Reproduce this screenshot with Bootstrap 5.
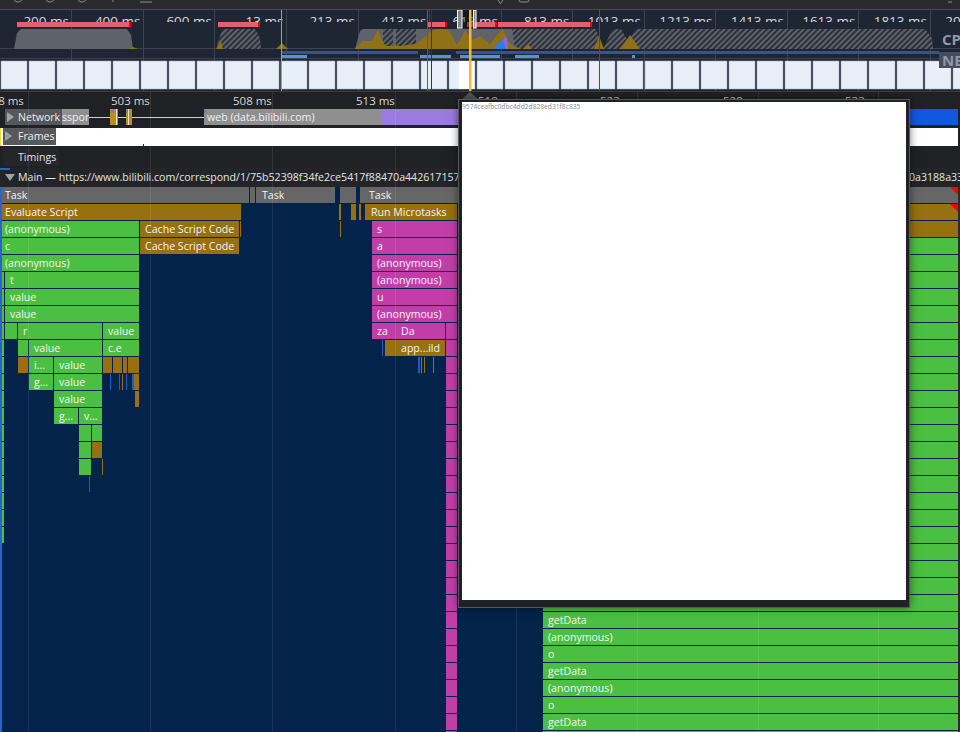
<!DOCTYPE html>
<html>
  <head>
    <title>Performance</title>
    <link href="https://cdn.jsdelivr.net/npm/bootstrap@5.3.3/dist/css/bootstrap.min.css" rel="stylesheet" />
    <script src="https://cdn.jsdelivr.net/npm/bootstrap@5.3.3/dist/js/bootstrap.bundle.min.js"></script>
    <style>
      body { background: #202124; font-family: "Open Sans", "Liberation Sans", sans-serif; font-size: 10.6px; color: #e3e3e3; }
      #app { width: 960px; height: 732px; }
      .toolbar { height: 10px; background: #292a2d; border-bottom: 1px solid #494c50; }
      .overview { height: 82px; background: #1f2633; border-bottom: 1px solid #3a3d42; }
      .over-label { top: 1px; height: 11px; width: 60px; text-align: right; font-size: 13.5px; line-height: 20px; color: #d5d8dc; }
      .ruler { height: 17px; }
      .ruler-label { top: 1px; font-size: 11.5px; line-height: 16px; color: #d6d6d6; }
      .net-track { height: 17px; margin-bottom: 2px; background: #202124; }
      .seg { top: 0; height: 16px; line-height: 16px; color: #f1f1f1; padding-left: 3px; }
      .net-line { left: 89px; top: 8px; width: 115px; height: 1px; background: #cfcfcf; }
      .net-tick { top: 0; width: 1px; height: 16px; background: #e8e2cc; }
      .net-dot { top: 1px; width: 3px; height: 3px; background: #6d86a8; }
      .chip { left: 5px; top: 0; height: 16px; line-height: 16px; width: 57px; padding-left: 13px; background: #55575b; color: #ececec; }
      .tri { width: 0; height: 0; border-style: solid; }
      .tri-right { left: 2px; top: 3px; border-width: 5px 0 5px 7px; border-color: transparent transparent transparent #a2a2a2; }
      .tri-down { left: 5px; top: 6px; border-width: 7px 5px 0 5px; border-color: #a2a2a2 transparent transparent transparent; }
      .frames-track { height: 18px; margin-right: 2px; background: #fff; border-left: 1px solid #f2d93c; }
      .frames-chip { left: 2px; width: 53px; height: 17px; background: #58595c; line-height: 17px; padding-left: 15px; color: #eee; }
      .frames-dot { left: 142px; bottom: 0; width: 1px; height: 2px; background: #222; }
      .timings-track { height: 22px; line-height: 22px; padding-left: 18px; }
      .timings-chip { left: 3px; top: 2px; width: 56px; height: 18px; background: #252628; }
      .main-head { height: 19px; line-height: 19px; padding-left: 18px; white-space: nowrap; background: #232427; color: #e4e4e4; }
      .main-tail { left: 909px; }
      .main-edge { left: 0; top: 0; width: 10px; height: 2px; background: #2a62c8; }
      .flame { background: #03234a; }
      .flame-edge { left: 0; top: 0; bottom: 0; width: 2px; background: #2a62c8; }
      .flame-right { right: 0; top: 0; bottom: 0; width: 2px; background: #2b2c2f; }
      .bar { height: 16px; line-height: 16px; color: #f4f4f4; white-space: nowrap; overflow: hidden; }
      .c-task { background: #666; }
      .c-gold { background: #97700f; }
      .c-green { background: #4bbf41; }
      .c-pink { background: #c13ea8; }
      .c-blue { background: #1a5fc4; }
      .corner { right: 0; top: 0; width: 0; height: 0; border-style: solid; border-width: 0 8px 8px 0; border-color: transparent #f00 transparent transparent; }
      .gridline { top: 92px; bottom: 0; width: 1px; background: rgba(255, 255, 255, 0.09); pointer-events: none; }
      .popup { left: 458px; top: 99px; width: 452px; height: 509px; background: #202124; border: 1px solid #55585c; box-shadow: 0 0 8px rgba(0, 0, 0, 0.5); padding: 2px 3px 7px 3px; }
      .popup-body { background: #fff; color: #8a8a8a; font-size: 6.7px; line-height: 10px; }
      .popup-arrow { left: 462px; top: 92px; width: 0; height: 0; border-style: solid; border-width: 0 8px 7px 8px; border-color: transparent transparent #55585c transparent; }
      .lane-tag { right: 0; color: #8f98a8; font-weight: 700; font-size: 15px; padding-left: 3px; width: 21px; overflow: hidden; }
      .lane-cpu { top: 20px; height: 18px; line-height: 18px; }
      .lane-net { top: 42px; height: 16px; line-height: 16px; background: #454c5a; }
    </style>
  </head>
  <body class="m-0 overflow-hidden">
    <div id="app" class="position-relative d-flex flex-column overflow-hidden">
      <div class="toolbar flex-shrink-0">
        <svg width="960" height="9" class="d-block" fill="none" stroke="#8a8c90" stroke-width="1">
          <circle cx="18" cy="-3" r="5" /><circle cx="50" cy="-3" r="5" /><circle cx="82" cy="-3" r="5" />
          <path d="M113 0v2M140 2h12M498 0l2 3M503 0l-3 4M948 2h4" />
          <rect x="519" y="-6" width="10" height="8" rx="2" />
        </svg>
      </div>

      <div id="overview" class="overview position-relative flex-shrink-0 overflow-hidden"></div>

      <div id="ruler" class="ruler position-relative flex-shrink-0"></div>

      <div id="network" class="net-track position-relative flex-shrink-0"></div>

      <div class="frames-track position-relative flex-shrink-0">
        <div class="frames-chip position-absolute top-0">
          <span class="tri tri-right position-absolute"></span>Frames
        </div>
        <span class="frames-dot position-absolute"></span>
      </div>

      <div class="timings-track position-relative flex-shrink-0">
        <span class="timings-chip position-absolute"></span>
        <span class="position-relative">Timings</span>
      </div>

      <div class="main-head position-relative flex-shrink-0 overflow-hidden">
        <span class="main-edge position-absolute"></span>
        <span class="tri tri-down position-absolute"></span>
        Main — https://www.bilibili.com/correspond/1/75b52398f34fe2ce5417f88470a442617157d
        <span class="main-tail position-absolute top-0">0a3188a33</span>
      </div>

      <div id="flame" class="flame position-relative flex-grow-1 overflow-hidden"></div>

      <div id="grid"></div>

      <div class="popup-arrow position-absolute"></div>
      <div class="popup position-absolute">
        <div class="popup-body h-100">9574ceafbc0dbc4dd2d828ed31f8c835</div>
      </div>
    </div>

    <script>
      // overview: everything is drawn in page coordinates (svg viewBox starts at y=10)
      let overLabels = ["200 ms", "400 ms", "600 ms", "13 ms", "213 ms", "413 ms", "613 ms", "813 ms", "1013 ms", "1213 ms", "1413 ms", "1613 ms", "1813 ms", "2013 ms"];
      let overGrid = [71, 143, 214, 286, 358, 429, 501, 572, 644, 715, 787, 858, 930];
      let thumbs = "";
      for (let x = 1; x < 960; x += 28) {
        thumbs += `<rect x="${x}" y="61" width="26" height="28" fill="#e8eff9" stroke="#aab3c2" stroke-width="0.6"/>`;
      }
      let gridSvg = overGrid.map((x) => `<path d="M${x + 0.5} 10V91" stroke="#3b4250"/>`).join("");
      let reds = [[17, 131], [218, 260], [428, 447], [467, 497], [498, 592]]
        .map((r) => `<rect x="${r[0]}" y="22" width="${r[1] - r[0]}" height="5" fill="#e0636c"/><rect x="${r[1] - 2}" y="22" width="2" height="5" fill="#f00"/>`)
        .join("");
      let netDark = [[282, 418], [456, 939]].map((r) => `<rect x="${r[0]}" y="51" width="${r[1] - r[0]}" height="3" fill="#2b5797"/>`).join("");
      let netLight = [[282, 307], [420, 451], [460, 500], [515, 539], [632, 635]]
        .map((r) => `<rect x="${r[0]}" y="55" width="${r[1] - r[0]}" height="3" fill="#5b8fd6"/>`)
        .join("");
      let overSvg = `
        <svg class="position-absolute top-0 start-0" width="960" height="82" viewBox="0 10 960 82">
          <defs>
            <pattern id="hatch" width="4" height="4" patternUnits="userSpaceOnUse" patternTransform="rotate(45)">
              <rect width="4" height="4" fill="#2b303b"/><rect width="2" height="4" fill="#5d626b"/>
            </pattern>
          </defs>
          ${gridSvg}
          <path d="M0 48.5H960M0 58.5H960" stroke="#3b4250"/>
          <path d="M14 49L17 33L21 29H127L131 35L133 49Z" fill="#5d626b"/>
          <path d="M216 49L222 30L225 29H255L260 38L261 49Z" fill="url(#hatch)"/>
          <path d="M355 49L360 31L363 29H513L517 49Z" fill="#5d626b"/>
          <rect x="383" y="29" width="10" height="20" fill="url(#hatch)"/>
          <rect x="396" y="29" width="20" height="20" fill="url(#hatch)"/>
          <path d="M515 49L512 29H596L603 49Z" fill="url(#hatch)"/>
          <path d="M603 49L612 30L618 29H621L628 41L636 29H925L932 38L933 49Z" fill="url(#hatch)"/>
          <path d="M355 49L362 41H372L378 29L382 41L386 46H400L415 44L420 41L430 32L435 29H447L452 35L457 45L460 40L465 30L472 40L480 36L490 44L497 35L503 29L508 41L513 46L522 49Z" fill="#8f7217"/>
          <path d="M523 49L528 44L532 49ZM594 49L599 36L604 49ZM620 49L630 35L640 49ZM276 49L282 43L288 49ZM216 49L221 41L223 49ZM128 49L133 47L138 49Z" fill="#8f7217"/>
          <path d="M493 49L500 41L503 40L507 49ZM364 49L367 47L371 49Z" fill="#2f7de0"/>
          <path d="M503 40L505 37L507 38L508 49L506 49Z" fill="#8a68e0"/>
          ${netDark}${netLight}${reds}
          ${thumbs}
          <rect x="459" y="61" width="15" height="28" fill="#fff"/>
          <rect x="462" y="10" width="11" height="18" fill="#000" opacity="0.35"/>
          <rect x="457.5" y="10" width="4.5" height="18" fill="#9a9a9a" fill-opacity="0.8" stroke="#fff"/>
          <rect x="473.5" y="10" width="2.5" height="18" fill="#9a9a9a" fill-opacity="0.8" stroke="#fff"/>
          <path d="M281.5 10V91" stroke="#d99a2b"/>
          <path d="M427.5 10V91" stroke="#2a62c8"/>
          <path d="M431.5 10V91" stroke="#2b3a40"/>
          <path d="M599.5 10V91" stroke="#b3262b"/>
          <rect x="469" y="10" width="2.5" height="81" fill="#f4b92f"/>
        </svg>`;
      let overLabelHtml = overLabels
        .map((text, i) => `<span class="over-label position-absolute overflow-hidden text-nowrap" style="left:${9 + i * 71.5}px">${text}</span>`)
        .join("");
      document.getElementById("overview").innerHTML = overLabelHtml + overSvg
        + `<div class="lane-tag lane-cpu position-absolute">CP</div>`
        + `<div class="lane-tag lane-net position-absolute">NE</div>`;

      // time ruler
      let rulerLabels = [[-15, "498 ms"], [111, "503 ms"], [233, "508 ms"], [356, "513 ms"], [478, "518 ms"], [600, "523 ms"], [723, "528 ms"], [845, "533 ms"]];
      document.getElementById("ruler").innerHTML = rulerLabels
        .map((l) => `<span class="ruler-label position-absolute text-nowrap" style="left:${l[0]}px">${l[1]}</span>`)
        .join("");

      // network lane
      let netSegs = [
        [62, 89, "#8f8f8f", "sspor", 0],
        [110, 118, "#b98f20", ""],
        [126, 132, "#b98f20", ""],
        [204, 382, "#8f8f8f", "web (data.bilibili.com)"],
        [382, 460, "#9a7be0", ""],
        [460, 958, "#1158e0", ""],
      ];
      let netHtml = `<div class="net-line position-absolute"></div>`;
      for (let s of netSegs) {
        let pad = s[4] === undefined ? 3 : s[4];
        netHtml += `<div class="seg position-absolute overflow-hidden text-nowrap" style="left:${s[0]}px;width:${s[1] - s[0]}px;padding-left:${pad}px;background:${s[2]}">${s[3]}</div>`;
      }
      for (let x of [111, 126, 204]) netHtml += `<span class="net-dot position-absolute" style="left:${x}px"></span>`;
      for (let x of [116, 128]) netHtml += `<span class="net-tick position-absolute" style="left:${x}px"></span>`;
      netHtml += `<div class="chip position-absolute"><span class="tri tri-right position-absolute"></span>Network</div>`;
      document.getElementById("network").innerHTML = netHtml;

      // flame chart bars: [row, x0, x1, colour, text, left padding]
      let bars = [
        [0, 2, 249, "task", "Task", 3], [0, 250, 255, "task"], [0, 256, 335, "task", "Task", 6], [0, 340, 356, "task"], [0, 360, 458, "task", "Task", 9], [0, 880, 958, "task"],
        [1, 2, 239, "gold", "Evaluate Script", 3], [1, 239, 241, "gold"], [1, 339, 341, "gold"], [1, 351, 356, "gold"], [1, 359, 361, "gold"], [1, 365, 457, "gold", "Run Microtasks", 6], [1, 880, 958, "gold"],
        [2, 2, 139, "green", "(anonymous)", 3], [2, 140, 239, "gold", "Cache Script Code", 5], [2, 240, 241, "gold"], [2, 340, 341, "gold"], [2, 372, 457, "pink", "s", 5], [2, 880, 958, "gold"],
        [3, 2, 139, "green", "c", 3], [3, 140, 239, "gold", "Cache Script Code", 5], [3, 372, 457, "pink", "a", 5],
        [4, 2, 139, "green", "(anonymous)", 3], [4, 372, 457, "pink", "(anonymous)", 5],
        [5, 2, 4, "green"], [5, 5, 139, "green", "t", 5], [5, 372, 457, "pink", "(anonymous)", 5],
        [6, 2, 4, "green"], [6, 5, 139, "green", "value", 5], [6, 372, 457, "pink", "u", 5],
        [7, 2, 4, "green"], [7, 5, 139, "green", "value", 5], [7, 372, 457, "pink", "(anonymous)", 5],
        [8, 2, 4, "green"], [8, 5, 17, "green"], [8, 18, 102, "green", "r", 5], [8, 103, 139, "green", "value", 5], [8, 372, 396, "pink", "za", 5], [8, 396, 445, "pink", "Da", 5],
        [9, 2, 4, "green"], [9, 18, 28, "green"], [9, 29, 102, "green", "value", 5], [9, 103, 139, "green", "c.e", 5], [9, 382, 383, "blue"], [9, 385, 445, "gold", "app...ild", 16],
        [10, 2, 4, "green"], [10, 18, 28, "gold"], [10, 29, 53, "green", "i...", 5], [10, 54, 102, "green", "value", 5], [10, 103, 112, "gold"], [10, 113, 122, "gold"], [10, 123, 127, "gold"], [10, 128, 139, "gold"],
        [10, 418, 420, "blue"], [10, 421, 422, "gold"], [10, 424, 425, "gold"], [10, 433, 434, "gold"],
        [11, 2, 4, "green"], [11, 29, 53, "green", "g...", 5], [11, 54, 102, "green", "value", 5], [11, 110, 111, "blue"], [11, 119, 120, "blue"], [11, 122, 123, "gold"], [11, 126, 127, "blue"], [11, 132, 134, "blue"], [11, 134, 139, "gold"],
        [12, 2, 4, "green"], [12, 54, 102, "green", "value", 5], [12, 135, 139, "gold"],
        [13, 2, 4, "green"], [13, 54, 78, "green", "g...", 5], [13, 79, 102, "green", "v...", 5],
        [14, 2, 4, "green"], [14, 79, 91, "green"], [14, 92, 102, "green"],
        [15, 2, 4, "green"], [15, 79, 91, "green"], [15, 92, 102, "gold"],
        [16, 2, 4, "green"], [16, 79, 91, "green"], [16, 102, 103, "gold"],
        [17, 2, 4, "green"], [17, 89, 90, "blue"],
        [18, 2, 4, "green"], [19, 2, 4, "green"], [20, 2, 4, "green"],
      ];
      for (let r = 3; r < 24; r++) bars.push([r, 880, 958, "green"]);
      for (let r = 8; r < 33; r++) bars.push([r, 446, 457, "pink"]);
      let stack = ["getData", "(anonymous)", "o"];
      for (let r = 24; r < 33; r++) bars.push([r, 543, 958, "green", r === 24 ? "" : stack[(r - 25) % 3], 5]);

      let flameHtml = "";
      for (let b of bars) {
        let pad = b[5] === undefined ? 0 : b[5];
        let corner = b[0] < 2 && b[2] === 958 ? '<span class="corner position-absolute"></span>' : "";
        flameHtml += `<div class="bar position-absolute c-${b[3]}" style="top:${b[0] * 17}px;left:${b[1]}px;width:${b[2] - b[1]}px;padding-left:${pad}px">${b[4] || ""}${corner}</div>`;
      }
      flameHtml += '<span class="flame-edge position-absolute"></span><span class="flame-right position-absolute"></span>';
      document.getElementById("flame").innerHTML = flameHtml;

      // time grid runs over the ruler, the lanes and the flame chart
      document.getElementById("grid").innerHTML = [28, 150, 272, 395, 516, 637, 758, 878]
        .map((x) => `<div class="gridline position-absolute" style="left:${x}px"></div>`)
        .join("");
    </script>
  </body>
</html>
